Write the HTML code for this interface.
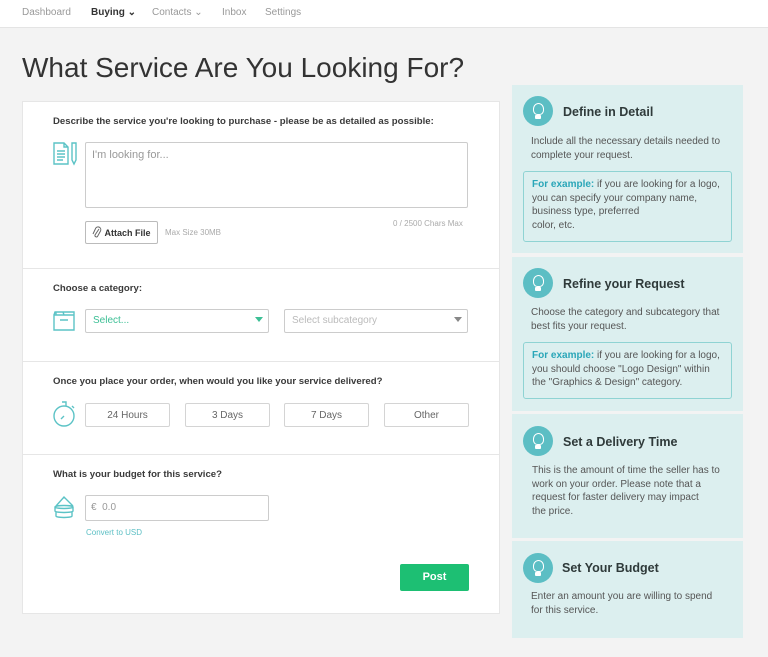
<!DOCTYPE html>
<html><head><meta charset="utf-8"><style>
*{box-sizing:border-box;margin:0;padding:0}
body{width:768px;height:657px;background:#f3f3f3;font-family:"Liberation Sans",sans-serif;position:relative;overflow:hidden;color:#333}
.a{position:absolute}
.nav{left:0;top:0;width:768px;height:28px;background:#fff;border-bottom:1px solid #e4e4e4}
.nav span{position:absolute;top:7px;font-size:10px;color:#999}
h1{position:absolute;left:22px;top:52px;font-size:28px;font-weight:400;color:#333;letter-spacing:0}
.card{left:22px;top:101px;width:478px;height:513px;background:#fff;border:1px solid #e6e6e6}
.hr{left:23px;width:476px;height:1px;background:#e6e6e6}
.lbl{font-size:9.6px;font-weight:bold;color:#3a3a3a}
.box{border:1px solid #ccc;background:#fff;border-radius:2px}
.btn{border:1px solid #d4d4d4;background:#fff;font-size:10px;color:#666;text-align:center;line-height:23px;border-radius:2px}
.blk{left:512px;width:231px;background:#dcefef}
.circ{width:30px;height:30px;border-radius:50%;background:#5cbec4}
.circ:after{content:"";position:absolute;left:10px;top:7px;width:9px;height:10px;border:1.5px solid #fff;border-radius:50% 50% 40% 40%}
.circ:before{content:"";position:absolute;left:12px;top:19px;width:6px;height:4px;background:#fff;border-radius:1px}
.tt{font-size:12.5px;font-weight:bold;color:#2f3a3a}
.tx{font-size:10px;color:#555;line-height:13.5px}
.ex{left:523px;width:209px;border:1px solid #8fd3d3;border-radius:3px;padding:6px 8px;font-size:10px;line-height:13.5px;color:#555}
.ex b{color:#2aa6b8}
.ic{stroke:#5cc3c6;fill:none;stroke-width:1.4}
</style></head><body>
<div class="a nav">
<span style="left:22px">Dashboard</span>
<span style="left:91px;color:#333;font-weight:bold">Buying ⌄</span>
<span style="left:152px">Contacts ⌄</span>
<span style="left:222px">Inbox</span>
<span style="left:265px">Settings</span>
</div>
<h1>What Service Are You Looking For?</h1>
<div class="a card"></div>
<div class="a hr" style="top:268px"></div>
<div class="a hr" style="top:361px"></div>
<div class="a hr" style="top:454px"></div>

<div class="a lbl" style="left:53px;top:116px">Describe the service you're looking to purchase - please be as detailed as possible:</div>
<svg class="a" style="left:52px;top:141px" width="27" height="26" viewBox="0 0 27 26"><path class="ic" d="M2 2h10l4 4v17H2z M12 2v4h4 M5 10h8 M5 13h8 M5 16h8 M5 19h6 M20 2h4v17l-2 4-2-4z"/></svg>
<div class="a box" style="left:85px;top:142px;width:383px;height:66px"></div>
<div class="a" style="left:92px;top:149px;font-size:11px;color:#999">I'm looking for...</div>
<div class="a btn" style="left:85px;top:221px;width:73px;height:23px;font-weight:bold;color:#333;font-size:9px;border-color:#bbb;padding-left:12px">Attach File</div>
<svg class="a" style="left:92px;top:226px" width="10" height="14" viewBox="0 0 10 14"><path d="M7 3L3 9a1.5 1.5 0 0 0 2.5 1.5L8.5 5a2.8 2.8 0 0 0-4.7-3L1 8" stroke="#666" stroke-width="1" fill="none"/></svg>
<div class="a" style="left:165px;top:228px;font-size:8px;color:#aaa">Max Size 30MB</div>
<div class="a" style="left:393px;top:219px;font-size:8px;color:#aaa">0 / 2500 Chars Max</div>

<div class="a lbl" style="left:53px;top:283px">Choose a category:</div>
<svg class="a" style="left:52px;top:310px" width="26" height="22" viewBox="0 0 26 22"><path class="ic" d="M2 5h20v15H2z M2 5l1-3h8l1 3 M8 10h8 M4 5V2h18v3"/></svg>
<div class="a box" style="left:85px;top:309px;width:184px;height:24px"></div>
<div class="a" style="left:93px;top:315px;font-size:10px;color:#3cbf95">Select...</div>
<div class="a" style="left:255px;top:317px;border:4px solid transparent;border-top:5px solid #3cbf95"></div>
<div class="a box" style="left:284px;top:309px;width:184px;height:24px"></div>
<div class="a" style="left:292px;top:315px;font-size:10px;color:#bbb">Select subcategory</div>
<div class="a" style="left:454px;top:317px;border:4px solid transparent;border-top:5px solid #888"></div>

<div class="a lbl" style="left:53px;top:376px">Once you place your order, when would you like your service delivered?</div>
<svg class="a" style="left:52px;top:400px" width="26" height="28" viewBox="0 0 26 28"><circle class="ic" cx="12" cy="16" r="10"/><path class="ic" d="M10 2h4v4 M12 6v0 M12 16l-3 3 M20 6l2 2"/></svg>
<div class="a btn" style="left:85px;top:403px;width:85px;height:24px">24 Hours</div>
<div class="a btn" style="left:185px;top:403px;width:85px;height:24px">3 Days</div>
<div class="a btn" style="left:284px;top:403px;width:85px;height:24px">7 Days</div>
<div class="a btn" style="left:384px;top:403px;width:85px;height:24px">Other</div>

<div class="a lbl" style="left:53px;top:469px">What is your budget for this service?</div>
<svg class="a" style="left:52px;top:494px" width="26" height="26" viewBox="0 0 26 26"><path class="ic" d="M4 12l8-9 9 9 M3 13c0-2 18-2 18 0s-18 2-18 0z M3 13v4c0 2 18 2 18 0v-4 M4 18v4c0 2 16 2 16 0v-4"/></svg>
<div class="a box" style="left:85px;top:495px;width:184px;height:26px"></div>
<div class="a" style="left:91px;top:502px;font-size:10px;color:#999">€ &nbsp;0.0</div>
<div class="a" style="left:86px;top:528px;font-size:8px;color:#5cbfc4">Convert to USD</div>
<div class="a" style="left:400px;top:564px;width:69px;height:27px;background:#1dbf73;border-radius:2px;color:#fff;font-size:11px;font-weight:bold;text-align:center;line-height:27px">Post</div>

<div class="a blk" style="top:85px;height:168px"></div>
<div class="a circ" style="left:523px;top:96px"></div>
<div class="a tt" style="left:563px;top:105px">Define in Detail</div>
<div class="a tx" style="left:531px;top:135px">Include all the necessary details needed to<br>complete your request.</div>
<div class="a ex" style="top:171px;height:71px"><b>For example:</b> if you are looking for a logo, you can specify your company name, business type, preferred<br>color, etc.</div>

<div class="a blk" style="top:257px;height:154px"></div>
<div class="a circ" style="left:523px;top:268px"></div>
<div class="a tt" style="left:563px;top:277px">Refine your Request</div>
<div class="a tx" style="left:531px;top:306px">Choose the category and subcategory that<br>best fits your request.</div>
<div class="a ex" style="top:342px;height:57px"><b>For example:</b> if you are looking for a logo, you should choose "Logo Design" within the "Graphics &amp; Design" category.</div>

<div class="a blk" style="top:414px;height:124px"></div>
<div class="a circ" style="left:523px;top:426px"></div>
<div class="a tt" style="left:563px;top:435px">Set a Delivery Time</div>
<div class="a tx" style="left:532px;top:464px">This is the amount of time the seller has to<br>work on your order. Please note that a<br>request for faster delivery may impact<br>the price.</div>

<div class="a blk" style="top:541px;height:97px"></div>
<div class="a circ" style="left:523px;top:553px"></div>
<div class="a tt" style="left:562px;top:561px">Set Your Budget</div>
<div class="a tx" style="left:531px;top:590px">Enter an amount you are willing to spend<br>for this service.</div>
</body></html>
